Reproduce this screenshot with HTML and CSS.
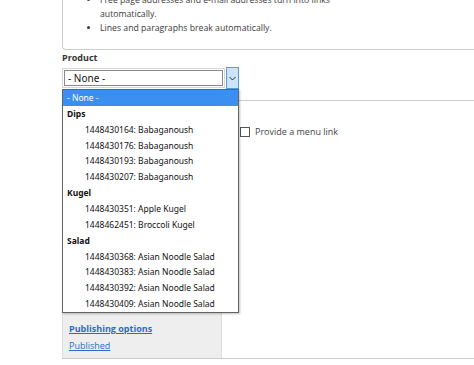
FILE: index.html
```html
<!DOCTYPE html>
<html lang="en">
<head>
    <meta charset="UTF-8">
    <meta name="viewport" content="width=device-width, initial-scale=1.0">
    <title>Product reference</title>
    <link rel="stylesheet" href="styles.css">
</head>
<body>
    <div class="page">
        <div class="tips">
            <ul>
                <li>Free page addresses and e-mail addresses turn into links automatically.</li>
                <li>Lines and paragraphs break automatically.</li>
            </ul>
        </div>

        <div class="field">
            <label class="field-label" for="product">Product</label>
            <div class="select-wrap">
                <div class="select">
                    <div class="select-box">
                        <div class="select-value" id="product">- None -</div>
                    </div>
                    <div class="select-arrow">
                        <svg width="7" height="5" viewBox="0 0 7 5"><path d="M0.5 1 L3.5 4 L6.5 1" fill="none" stroke="#333" stroke-width="1"/></svg>
                    </div>
                </div>

                <ul class="dropdown">
                    <li class="opt selected">- None -</li>
                    <li class="group">Dips</li>
                    <li class="opt">1448430164: Babaganoush</li>
                    <li class="opt">1448430176: Babaganoush</li>
                    <li class="opt">1448430193: Babaganoush</li>
                    <li class="opt">1448430207: Babaganoush</li>
                    <li class="group">Kugel</li>
                    <li class="opt">1448430351: Apple Kugel</li>
                    <li class="opt">1448462451: Broccoli Kugel</li>
                    <li class="group">Salad</li>
                    <li class="opt">1448430368: Asian Noodle Salad</li>
                    <li class="opt">1448430383: Asian Noodle Salad</li>
                    <li class="opt">1448430392: Asian Noodle Salad</li>
                    <li class="opt">1448430409: Asian Noodle Salad</li>
                </ul>
            </div>
        </div>

        <div class="vtabs">
            <ul class="vtabs-menu">
                <li class="vtab">
                    <a href="#" class="vtab-title">Publishing options</a>
                    <a href="#" class="vtab-summary">Published</a>
                </li>
            </ul>
            <div class="vtabs-pane">
                <label class="check">
                    <span class="check-box"></span>
                    Provide a menu link
                </label>
            </div>
        </div>
    </div>
</body>
</html>
```

FILE: styles.css
```css
body {
    margin: 0;
    font-family: "Open Sans", "Noto Sans", sans-serif;
    font-size: 9px;
    color: #333;
    background: #fff;
    overflow: hidden;
}
.page {
    padding-left: 62px;
}
.tips {
    margin-top: -7px;
    margin-right: -10px;
    border: 1px solid #ccc;
    border-top: none;
    border-right: none;
    border-bottom-left-radius: 4px;
    padding: 0 0 14px 0;
    color: #3a3a3a;
    font-size: 8.7px;
}
.tips ul {
    margin: 0;
    padding-left: 37px;
    width: 270px;
    line-height: 14px;
}
.field {
    margin-top: 2px;
}
.field-label {
    display: block;
    font-weight: bold;
    font-size: 9px;
    line-height: 12px;
    color: #333;
    margin-bottom: 3px;
}
.select-wrap {
    position: relative;
    width: 177px;
}
.select {
    display: flex;
    align-items: center;
    height: 22px;
}
.select-box {
    flex: 1;
    border: 1px solid #d6d6d6;
    padding: 1px;
    background: #fff;
}
.select-value {
    border: 1px solid #8a8a8a;
    height: 14px;
    line-height: 14px;
    padding-left: 3px;
    font-family: "Noto Sans", sans-serif;
    font-size: 10px;
    color: #111;
}
.select-arrow {
    width: 11px;
    height: 20px;
    margin-left: 1px;
    background: #cce4f7;
    border: 1px solid #569de5;
    display: flex;
    align-items: center;
    justify-content: center;
}
.dropdown {
    position: absolute;
    left: 0;
    top: 100%;
    width: 175px;
    margin: 0;
    padding: 0;
    list-style: none;
    background: #fff;
    border: 1px solid #646464;
    box-shadow: 1px 1px 2px rgba(0, 0, 0, 0.25);
    font-family: "Noto Sans", sans-serif;
    font-size: 8.5px;
    color: #111;
    z-index: 2;
}
.dropdown li {
    height: 15.86px;
    line-height: 15.86px;
    white-space: nowrap;
}
.opt {
    padding-left: 22px;
}
.opt.selected {
    padding-left: 4px;
    background: #3b8ff0;
    color: #fff;
}
.group {
    padding-left: 4px;
    font-weight: bold;
}
.vtabs {
    display: flex;
    margin-top: 11px;
    margin-right: -10px;
    border-top: 1px solid #ccc;
    border-bottom: 1px solid #ccc;
    height: 257px;
}
.vtabs-menu {
    width: 158px;
    margin: 0;
    padding: 0;
    list-style: none;
    background: #eee;
    border-left: 1px solid #ddd;
    border-right: 1px solid #ddd;
    display: flex;
    flex-direction: column;
    justify-content: flex-end;
}
.vtab {
    padding: 0 0 4px 6px;
    line-height: 17px;
}
.vtab a {
    display: block;
    color: #2c6bc4;
    text-decoration: underline;
}
.vtab-title {
    font-weight: bold;
}
.vtabs-pane {
    flex: 1;
    padding: 24px 0 0 18px;
}
.check {
    display: flex;
    align-items: center;
    gap: 5px;
    color: #444;
    font-size: 9px;
}
.check-box {
    width: 10px;
    height: 10px;
    border: 1px solid #555;
    box-sizing: border-box;
}
```
